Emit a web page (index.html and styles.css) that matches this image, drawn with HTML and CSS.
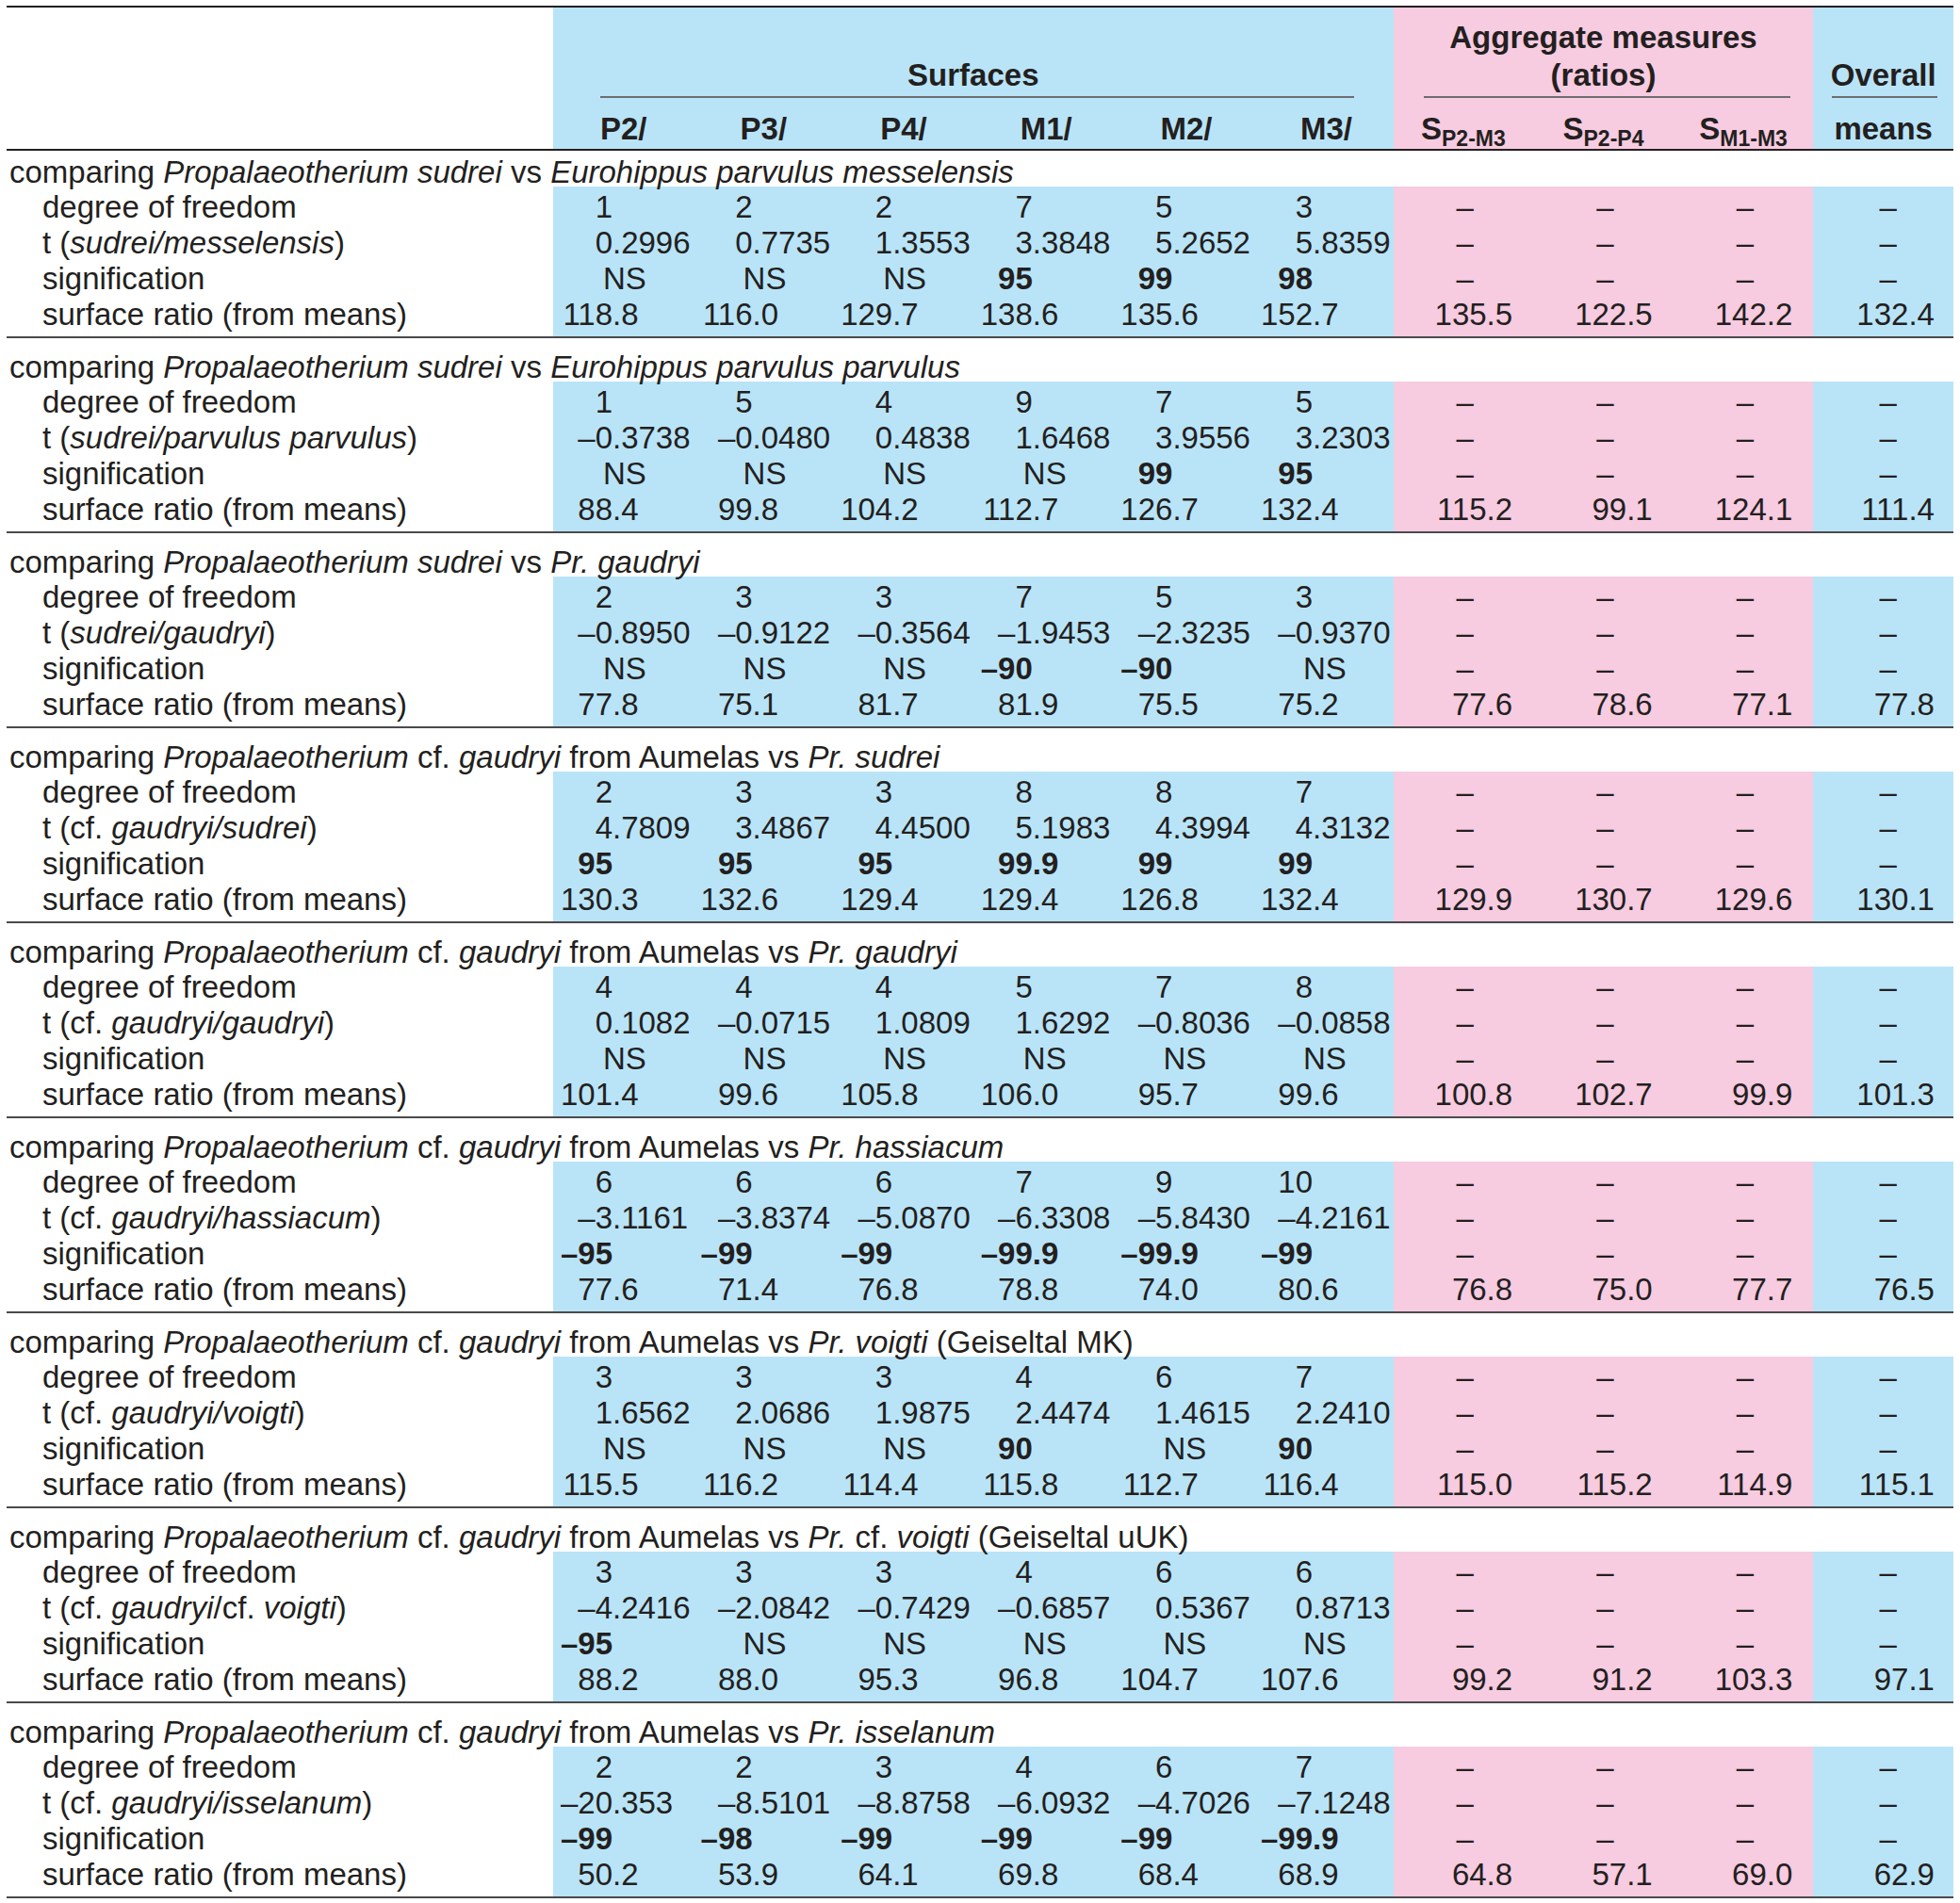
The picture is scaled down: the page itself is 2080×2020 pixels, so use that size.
FILE: index.html
```html
<!DOCTYPE html>
<html lang="en">
<head>
<meta charset="utf-8">
<title>Surface ratio comparisons</title>
<link rel="stylesheet" href="styles.css">
</head>
<body>
<div class="table">
  <div class="head">
    <div class="h-label"></div>
    <div class="group surf">
      <div class="gtitle">Surfaces</div>
      <div class="gline"></div>
      <div class="cols"><span>P2/</span><span>P3/</span><span>P4/</span><span>M1/</span><span>M2/</span><span>M3/</span></div>
    </div>
    <div class="group agg">
      <div class="gtitle">Aggregate measures<br>(ratios)</div>
      <div class="gline"></div>
      <div class="cols"><span>S<sub>P2-M3</sub></span><span>S<sub>P2-P4</sub></span><span>S<sub>M1-M3</sub></span></div>
    </div>
    <div class="group overall">
      <div class="gtitle">Overall</div>
      <div class="gline"></div>
      <div class="cols"><span>means</span></div>
    </div>
  </div>
  <div id="sections"></div>
</div>
<script src="app.js"></script>
</body>
</html>
```

FILE: styles.css
```css
:root {
  --ink: #231f20;
  --blue: #b9e4f8;
  --pink: #f7cbe0;
  --rule: #4a4a4c;
  --label: 580px;
}

html, body {
  margin: 0;
  padding: 0;
  background: #fff;
}

body {
  font-family: "Liberation Sans", Arial, Helvetica, sans-serif;
  font-size: 33px;
  color: var(--ink);
}

.table {
  width: 2066px;
  margin: 6px 7px 0 7px;
}

/* ---------- header ---------- */
.head {
  display: grid;
  grid-template-columns: var(--label) 6fr 3fr 1fr;
  border-top: 2.5px solid var(--ink);
  border-bottom: 2px solid var(--ink);
  font-weight: 700;
}

.group {
  display: flex;
  flex-direction: column;
  padding: 12px 0 1px;
}

.surf, .overall { background: var(--blue); }
.agg { background: var(--pink); }

.gtitle {
  height: 80px;
  line-height: 40px;
  display: flex;
  align-items: flex-end;
  justify-content: center;
  text-align: center;
}

.gline {
  height: 2px;
  margin-top: 2px;
  background: #6d6e71;
}

.surf .gline { margin-left: 50px; margin-right: 42px; }
.agg .gline { margin-left: 32px; margin-right: 24px; }
.overall .gline { margin-left: 20px; margin-right: 17px; }

.cols {
  display: grid;
  margin-top: 12px;
  line-height: 41px;
  white-space: nowrap;
}

.surf .cols { grid-template-columns: repeat(6, 1fr); }
.surf .cols span { padding-left: 50px; }
.agg .cols { grid-template-columns: repeat(3, 1fr); text-align: center; }
.overall .cols { text-align: center; }

sub {
  font-size: 23px;
  line-height: 0;
  vertical-align: -7px;
}

/* ---------- sections ---------- */
.title {
  line-height: 30px;
  padding: 8px 0 0 3px;
  white-space: nowrap;
}

.sec + .sec .title { padding-top: 16px; }

.body {
  padding: 3px 0 4px;
  border-bottom: 2px solid var(--rule);
  background: linear-gradient(to right,
    transparent var(--label),
    var(--blue) var(--label),
    var(--blue) calc(var(--label) + (100% - var(--label)) * 0.6),
    var(--pink) calc(var(--label) + (100% - var(--label)) * 0.6),
    var(--pink) calc(var(--label) + (100% - var(--label)) * 0.9),
    var(--blue) calc(var(--label) + (100% - var(--label)) * 0.9));
}

.row {
  display: grid;
  grid-template-columns: var(--label) repeat(10, 1fr);
  line-height: 38px;
  white-space: nowrap;
}

.lab { padding-left: 38px; }

.c { display: flex; }
.c .i { flex: 0 0 63px; text-align: right; }
.c.ag .i { flex-basis: 99px; }
.c.ov .i { flex-basis: 101px; }

.c .ns { padding-left: 53px; }
.c.ag .dash { padding-left: 67px; }
.c.ov .dash { padding-left: 70px; }

.bold { font-weight: 700; }
```

FILE: app.js
```js
const D = '\u2013';
const data = [
  {
    title: 'comparing <i>Propalaeotherium sudrei</i> vs <i>Eurohippus parvulus messelensis</i>',
    t: 't (<i>sudrei/messelensis</i>)',
    df: ['1','2','2','7','5','3'],
    tv: ['0.2996','0.7735','1.3553','3.3848','5.2652','5.8359'],
    sig: ['NS','NS','NS','95','99','98'],
    r: ['118.8','116.0','129.7','138.6','135.6','152.7'],
    ag: ['135.5','122.5','142.2'], ov: '132.4'
  },
  {
    title: 'comparing <i>Propalaeotherium sudrei</i> vs <i>Eurohippus parvulus parvulus</i>',
    t: 't (<i>sudrei/parvulus parvulus</i>)',
    df: ['1','5','4','9','7','5'],
    tv: ['-0.3738','-0.0480','0.4838','1.6468','3.9556','3.2303'],
    sig: ['NS','NS','NS','NS','99','95'],
    r: ['88.4','99.8','104.2','112.7','126.7','132.4'],
    ag: ['115.2','99.1','124.1'], ov: '111.4'
  },
  {
    title: 'comparing <i>Propalaeotherium sudrei</i> vs <i>Pr. gaudryi</i>',
    t: 't (<i>sudrei/gaudryi</i>)',
    df: ['2','3','3','7','5','3'],
    tv: ['-0.8950','-0.9122','-0.3564','-1.9453','-2.3235','-0.9370'],
    sig: ['NS','NS','NS','-90','-90','NS'],
    r: ['77.8','75.1','81.7','81.9','75.5','75.2'],
    ag: ['77.6','78.6','77.1'], ov: '77.8'
  },
  {
    title: 'comparing <i>Propalaeotherium</i> cf. <i>gaudryi</i> from Aumelas vs <i>Pr. sudrei</i>',
    t: 't (cf. <i>gaudryi/sudrei</i>)',
    df: ['2','3','3','8','8','7'],
    tv: ['4.7809','3.4867','4.4500','5.1983','4.3994','4.3132'],
    sig: ['95','95','95','99.9','99','99'],
    r: ['130.3','132.6','129.4','129.4','126.8','132.4'],
    ag: ['129.9','130.7','129.6'], ov: '130.1'
  },
  {
    title: 'comparing <i>Propalaeotherium</i> cf. <i>gaudryi</i> from Aumelas vs <i>Pr. gaudryi</i>',
    t: 't (cf. <i>gaudryi/gaudryi</i>)',
    df: ['4','4','4','5','7','8'],
    tv: ['0.1082','-0.0715','1.0809','1.6292','-0.8036','-0.0858'],
    sig: ['NS','NS','NS','NS','NS','NS'],
    r: ['101.4','99.6','105.8','106.0','95.7','99.6'],
    ag: ['100.8','102.7','99.9'], ov: '101.3'
  },
  {
    title: 'comparing <i>Propalaeotherium</i> cf. <i>gaudryi</i> from Aumelas vs <i>Pr. hassiacum</i>',
    t: 't (cf. <i>gaudryi/hassiacum</i>)',
    df: ['6','6','6','7','9','10'],
    tv: ['-3.1161','-3.8374','-5.0870','-6.3308','-5.8430','-4.2161'],
    sig: ['-95','-99','-99','-99.9','-99.9','-99'],
    r: ['77.6','71.4','76.8','78.8','74.0','80.6'],
    ag: ['76.8','75.0','77.7'], ov: '76.5'
  },
  {
    title: 'comparing <i>Propalaeotherium</i> cf. <i>gaudryi</i> from Aumelas vs <i>Pr. voigti</i> (Geiseltal MK)',
    t: 't (cf. <i>gaudryi/voigti</i>)',
    df: ['3','3','3','4','6','7'],
    tv: ['1.6562','2.0686','1.9875','2.4474','1.4615','2.2410'],
    sig: ['NS','NS','NS','90','NS','90'],
    r: ['115.5','116.2','114.4','115.8','112.7','116.4'],
    ag: ['115.0','115.2','114.9'], ov: '115.1'
  },
  {
    title: 'comparing <i>Propalaeotherium</i> cf. <i>gaudryi</i> from Aumelas vs <i>Pr.</i> cf. <i>voigti</i> (Geiseltal uUK)',
    t: 't (cf. <i>gaudryi</i>/cf. <i>voigti</i>)',
    df: ['3','3','3','4','6','6'],
    tv: ['-4.2416','-2.0842','-0.7429','-0.6857','0.5367','0.8713'],
    sig: ['-95','NS','NS','NS','NS','NS'],
    r: ['88.2','88.0','95.3','96.8','104.7','107.6'],
    ag: ['99.2','91.2','103.3'], ov: '97.1'
  },
  {
    title: 'comparing <i>Propalaeotherium</i> cf. <i>gaudryi</i> from Aumelas vs <i>Pr. isselanum</i>',
    t: 't (cf. <i>gaudryi/isselanum</i>)',
    df: ['2','2','3','4','6','7'],
    tv: ['-20.353','-8.5101','-8.8758','-6.0932','-4.7026','-7.1248'],
    sig: ['-99','-98','-99','-99','-99','-99.9'],
    r: ['50.2','53.9','64.1','69.8','68.4','68.9'],
    ag: ['64.8','57.1','69.0'], ov: '62.9'
  }
];

function num(v, cls, bold) {
  const s = v.replace('-', D);
  const k = s.indexOf('.');
  const ip = k < 0 ? s : s.slice(0, k);
  const fp = k < 0 ? '' : s.slice(k);
  return '<div class="c' + (cls ? ' ' + cls : '') + (bold ? ' bold' : '') + '"><span class="i">' + ip + '</span><span class="f">' + fp + '</span></div>';
}
function surf(v, bold) {
  if (v === 'NS') return '<div class="c"><span class="ns">NS</span></div>';
  return num(v, '', bold);
}
function dash(cls) {
  return '<div class="c ' + cls + '"><span class="dash">' + D + '</span></div>';
}
function dashes() {
  return dash('ag') + dash('ag') + dash('ag') + dash('ov');
}

let html = '';
for (const s of data) {
  html += '<section class="sec"><div class="title">' + s.title + '</div><div class="body">';
  html += '<div class="row"><div class="lab">degree of freedom</div>' + s.df.map(v => surf(v)).join('') + dashes() + '</div>';
  html += '<div class="row"><div class="lab">' + s.t + '</div>' + s.tv.map(v => surf(v)).join('') + dashes() + '</div>';
  html += '<div class="row"><div class="lab">signification</div>' + s.sig.map(v => surf(v, v !== 'NS')).join('') + dashes() + '</div>';
  html += '<div class="row"><div class="lab">surface ratio (from means)</div>' + s.r.map(v => surf(v)).join('') +
    s.ag.map(v => num(v, 'ag')).join('') + num(s.ov, 'ov') + '</div>';
  html += '</div></section>';
}
document.getElementById('sections').innerHTML = html;
```
